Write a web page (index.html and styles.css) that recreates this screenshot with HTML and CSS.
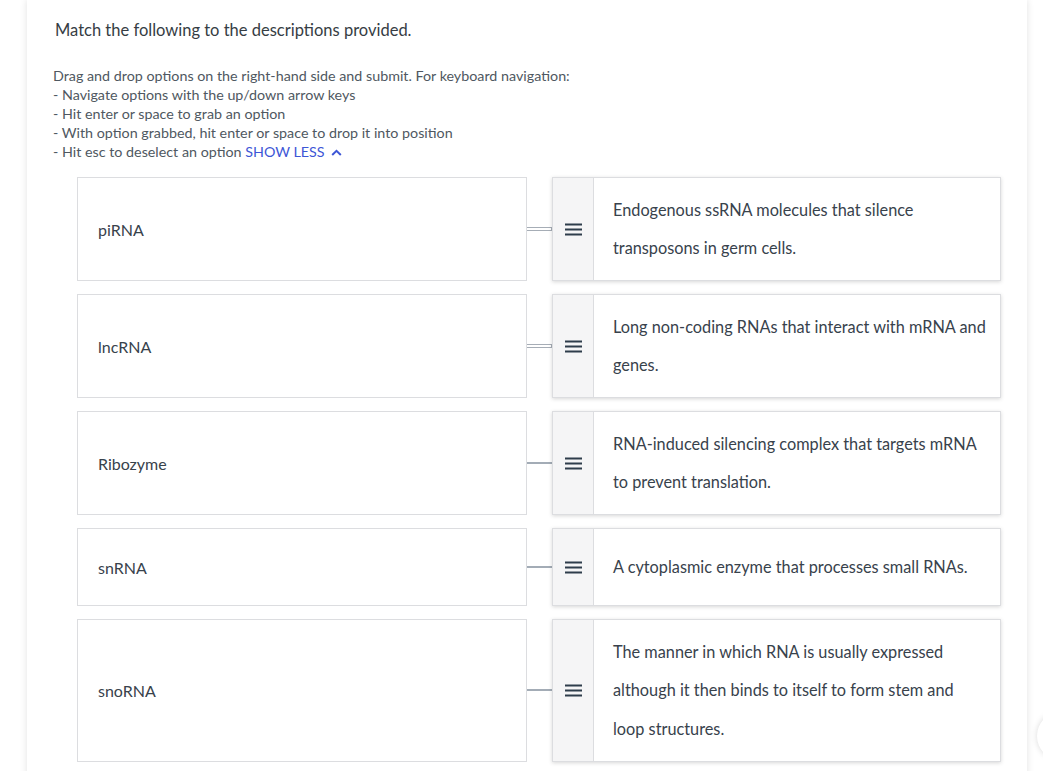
FILE: index.html
```html
<!DOCTYPE html>
<html lang="en">
<head>
<meta charset="utf-8">
<title>Match</title>
<link rel="stylesheet" href="styles.css">
</head>
<body>
<div class="page">
  <div class="card">
    <h1 class="title">Match the following to the descriptions provided.</h1>
    <div class="instructions">
      <div>Drag and drop options on the right-hand side and submit. For keyboard navigation:</div>
      <div>- Navigate options with the up/down arrow keys</div>
      <div>- Hit enter or space to grab an option</div>
      <div>- With option grabbed, hit enter or space to drop it into position</div>
      <div>- Hit esc to deselect an option <span class="show-less">SHOW LESS <svg class="chev" width="11" height="7" viewBox="0 0 11 7"><path d="M1.2 6 L5.5 1.8 L9.8 6" fill="none" stroke="#3d56d6" stroke-width="2"/></svg></span></div>
    </div>

    <div class="rows">
      <div class="row">
        <div class="term">piRNA</div>
        <div class="link"><span class="conn hollow"></span></div>
        <div class="desc">
          <div class="handle"><svg width="17" height="13" viewBox="0 0 17 13"><rect y="0.5" width="17" height="2" fill="#2e3d4b"/><rect y="5.5" width="17" height="2" fill="#2e3d4b"/><rect y="10.5" width="17" height="2" fill="#2e3d4b"/></svg></div>
          <div class="desc-text">Endogenous ssRNA molecules that silence transposons in germ cells.</div>
        </div>
      </div>
      <div class="row">
        <div class="term">lncRNA</div>
        <div class="link"><span class="conn hollow"></span></div>
        <div class="desc">
          <div class="handle"><svg width="17" height="13" viewBox="0 0 17 13"><rect y="0.5" width="17" height="2" fill="#2e3d4b"/><rect y="5.5" width="17" height="2" fill="#2e3d4b"/><rect y="10.5" width="17" height="2" fill="#2e3d4b"/></svg></div>
          <div class="desc-text">Long non-coding RNAs that interact with mRNA and genes.</div>
        </div>
      </div>
      <div class="row">
        <div class="term">Ribozyme</div>
        <div class="link"><span class="conn solid"></span></div>
        <div class="desc">
          <div class="handle"><svg width="17" height="13" viewBox="0 0 17 13"><rect y="0.5" width="17" height="2" fill="#2e3d4b"/><rect y="5.5" width="17" height="2" fill="#2e3d4b"/><rect y="10.5" width="17" height="2" fill="#2e3d4b"/></svg></div>
          <div class="desc-text">RNA-induced silencing complex that targets mRNA to prevent translation.</div>
        </div>
      </div>
      <div class="row">
        <div class="term">snRNA</div>
        <div class="link"><span class="conn solid"></span></div>
        <div class="desc">
          <div class="handle"><svg width="17" height="13" viewBox="0 0 17 13"><rect y="0.5" width="17" height="2" fill="#2e3d4b"/><rect y="5.5" width="17" height="2" fill="#2e3d4b"/><rect y="10.5" width="17" height="2" fill="#2e3d4b"/></svg></div>
          <div class="desc-text">A cytoplasmic enzyme that processes small RNAs.</div>
        </div>
      </div>
      <div class="row">
        <div class="term">snoRNA</div>
        <div class="link"><span class="conn solid"></span></div>
        <div class="desc">
          <div class="handle"><svg width="17" height="13" viewBox="0 0 17 13"><rect y="0.5" width="17" height="2" fill="#2e3d4b"/><rect y="5.5" width="17" height="2" fill="#2e3d4b"/><rect y="10.5" width="17" height="2" fill="#2e3d4b"/></svg></div>
          <div class="desc-text">The manner in which RNA is usually expressed although it then binds to itself to form stem and loop structures.</div>
        </div>
      </div>
    </div>
  </div>
  <div class="fab"></div>
</div>
</body>
</html>
```

FILE: styles.css
```css
html, body {
  margin: 0;
  padding: 0;
  background: #ffffff;
  overflow: hidden;
}
body {
  font-family: "Source Sans Pro", Lato, "Liberation Sans", sans-serif;
  color: #333e48;
}
.page {
  position: relative;
  height: 771px;
  padding: 0 16px 0 27px;
  overflow: hidden;
}
.card {
  width: 1000px;
  height: 800px;
  background: #fff;
  box-shadow: 0 0 7px rgba(0, 0, 0, 0.12);
  padding: 20px 0 0 0;
  box-sizing: border-box;
}
.title {
  margin: 0 0 0 28px;
  font-size: 16.5px;
  font-weight: 400;
  line-height: 20px;
  color: #363d44;
}
.instructions {
  margin: 26px 0 0 26px;
  font-size: 14.3px;
  line-height: 19px;
  color: #4f5861;
}
.show-less {
  margin-left: 0;
  color: #3d56d6;
}
.chev {
  margin-left: 3px;
  vertical-align: 1px;
}
.rows {
  margin: 16px 0 0 50px;
  display: flex;
  flex-direction: column;
  gap: 13px;
}
.row {
  display: grid;
  grid-template-columns: 450px 25px 449px;
  min-height: 78px;
}
.term {
  border: 1px solid #dcdde0;
  display: flex;
  align-items: center;
  padding-left: 20px;
  font-size: 16px;
  color: #38424c;
}
.link {
  display: flex;
  align-items: center;
}
.conn {
  display: block;
  width: 100%;
}
.conn.hollow {
  height: 2px;
  border: 1px solid #a6adb6;
  border-left: none;
  background: #fff;
}
.conn.solid {
  height: 2px;
  background: #a3acb6;
}
.desc {
  display: flex;
  border: 1px solid #dcdde0;
  box-shadow: 0 1px 4px rgba(0, 0, 0, 0.16);
  background: #fff;
}
.handle {
  width: 40px;
  flex: none;
  background: #f5f5f6;
  border-right: 1px solid #dcdde0;
  display: flex;
  align-items: center;
  justify-content: center;
}
.handle svg {
  display: block;
}
.desc-text {
  flex: 1;
  padding: 12.5px 12px 12.5px 19px;
  font-size: 16.3px;
  line-height: 38.5px;
  color: #38424c;
  display: flex;
  align-items: center;
}
.fab {
  position: absolute;
  left: 1037px;
  top: 712px;
  width: 48px;
  height: 48px;
  border-radius: 50%;
  background: #fff;
  box-shadow: 0 0 6px rgba(0, 0, 0, 0.15);
}
```
